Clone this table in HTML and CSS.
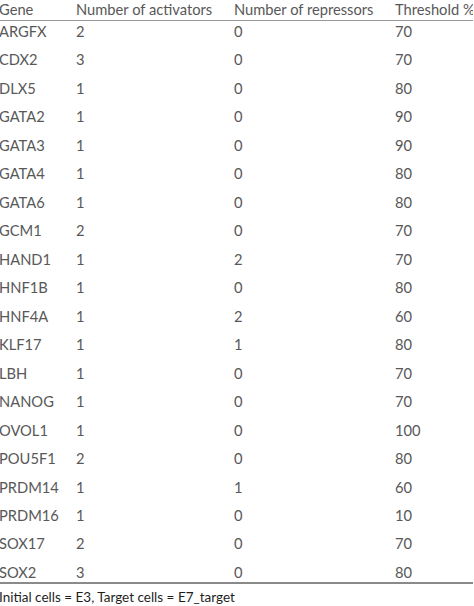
FILE: index.html
```html
<!DOCTYPE html>
<html>
<head>
<meta charset="utf-8">
<link rel="stylesheet" href="styles.css">
</head>
<body>
<div class="page">
  <div class="head">
    <div>Gene</div><div>Number of activators</div><div>Number of repressors</div><div>Threshold %</div>
  </div>
  <div class="rows">
    <div>ARGFX</div><div>2</div><div>0</div><div>70</div>
    <div>CDX2</div><div>3</div><div>0</div><div>70</div>
    <div>DLX5</div><div>1</div><div>0</div><div>80</div>
    <div>GATA2</div><div>1</div><div>0</div><div>90</div>
    <div>GATA3</div><div>1</div><div>0</div><div>90</div>
    <div>GATA4</div><div>1</div><div>0</div><div>80</div>
    <div>GATA6</div><div>1</div><div>0</div><div>80</div>
    <div>GCM1</div><div>2</div><div>0</div><div>70</div>
    <div>HAND1</div><div>1</div><div>2</div><div>70</div>
    <div>HNF1B</div><div>1</div><div>0</div><div>80</div>
    <div>HNF4A</div><div>1</div><div>2</div><div>60</div>
    <div>KLF17</div><div>1</div><div>1</div><div>80</div>
    <div>LBH</div><div>1</div><div>0</div><div>70</div>
    <div>NANOG</div><div>1</div><div>0</div><div>70</div>
    <div>OVOL1</div><div>1</div><div>0</div><div>100</div>
    <div>POU5F1</div><div>2</div><div>0</div><div>80</div>
    <div>PRDM14</div><div>1</div><div>1</div><div>60</div>
    <div>PRDM16</div><div>1</div><div>0</div><div>10</div>
    <div>SOX17</div><div>2</div><div>0</div><div>70</div>
    <div>SOX2</div><div>3</div><div>0</div><div>80</div>
  </div>
  <div class="foot">Initial cells = E3, Target cells = E7_target</div>
</div>
</body>
</html>
```
FILE: styles.css
```css
html, body {
  margin: 0;
  padding: 0;
  background: #fff;
  overflow: hidden;
}
.page {
  width: 474px;
  overflow: hidden;
  margin-left: -1px;
  font-family: Lato, "Open Sans", sans-serif;
  font-size: 14.7px;
  color: #585858;
}
.head, .rows {
  display: grid;
  grid-template-columns: 77px 158px 161px 104px;
  white-space: nowrap;
}
.head {
  height: 20px;
  line-height: 19px;
  border-bottom: 1.5px solid #9a9a9a;
}
.rows {
  grid-auto-rows: 20px;
  row-gap: 8.47px;
  line-height: 20px;
  padding-bottom: 0;
  border-bottom: 2px solid #8a8a8a;
}
.foot {
  font-size: 13.5px;
  line-height: 20px;
  padding-top: 3px;
  color: #1e1e1e;
}
```
